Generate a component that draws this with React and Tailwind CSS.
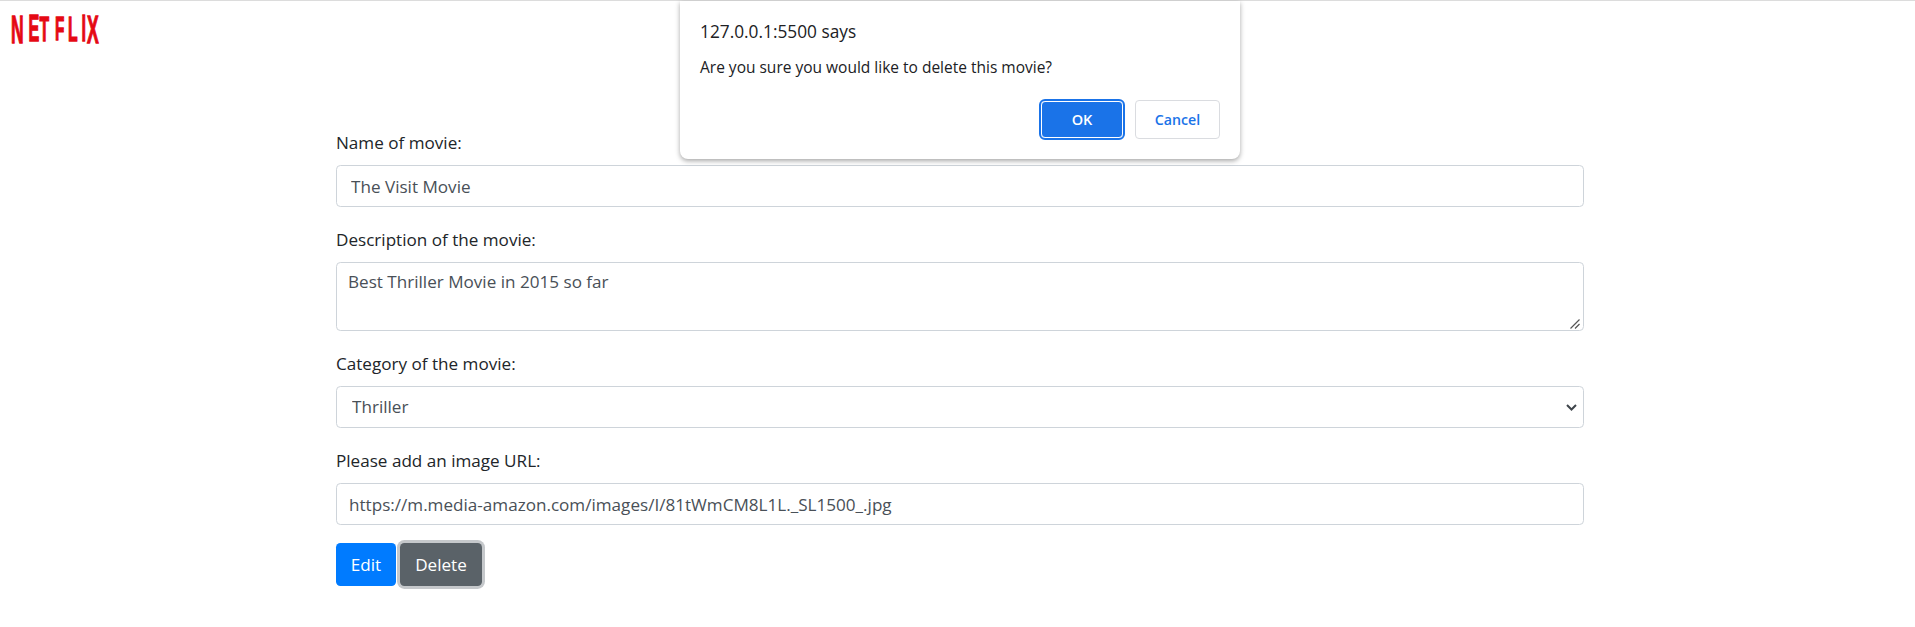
const logo = [
  ["N", 0, 29, 39],
  ["E", 17.5, 27, 36],
  ["T", 28.5, 26.5, 35],
  ["F", 44, 26, 34],
  ["L", 57, 26.5, 35],
  ["I", 70.5, 27, 36],
  ["X", 76, 29, 39],
];

export default function App() {
  const control =
    "block w-full h-[42px] rounded-[4.4px] border border-[#ced4da] bg-white text-[17.1px] text-[#495057] outline-none";
  const label = "block h-[26px] mb-[9px] text-[17.1px] leading-[26px] text-[#212529]";
  return (
    <div className="relative min-h-[627px] border-t border-[#dcdcdc] bg-white font-['Open_Sans','Noto_Sans',sans-serif]">
      <header className="h-[129px] pl-[11px] pt-[13px]">
        <svg width="100" height="32" viewBox="0 0 100 32" className="block">
          <text
            transform="scale(0.45 1)"
            fontFamily="Liberation Sans, sans-serif"
            fontWeight="700"
            fill="#e50914"
            stroke="#e50914"
            strokeWidth="1"
            style={{ vectorEffect: "non-scaling-stroke" }}
          >
            {logo.map(([c, x, y, s]) => (
              <tspan key={c} x={x / 0.45} y={y} fontSize={s} style={{ vectorEffect: "non-scaling-stroke" }}>
                {c}
              </tspan>
            ))}
          </text>
        </svg>
      </header>

      <form className="ml-[336px] w-[1248px]">
        <div className="mb-[20px]">
          <label className={label}>Name of movie:</label>
          <input className={control + " pl-[14px] pr-3"} defaultValue="The Visit Movie" />
        </div>
        <div className="mb-[20px]">
          <label className={label}>Description of the movie:</label>
          <div className="relative">
            <textarea
              className="block h-[69px] w-full resize-none rounded-[4.4px] border border-[#ced4da] bg-white px-[11px] py-[6px] text-[17.1px] leading-[26px] text-[#495057] outline-none"
              defaultValue="Best Thriller Movie in 2015 so far"
            />
            <svg
              width="10"
              height="10"
              viewBox="0 0 10 10"
              className="pointer-events-none absolute bottom-[2px] right-[4px]"
            >
              <path d="M0.5 9.5 L9.5 0.5 M5 9.5 L9.5 5" stroke="#555" strokeWidth="1.2" fill="none" />
            </svg>
          </div>
        </div>
        <div className="mb-[20px]">
          <label className={label}>Category of the movie:</label>
          <div className="relative">
            <select className={control + " appearance-none px-[15px]"} defaultValue="Thriller">
              <option>Thriller</option>
            </select>
            <svg
              width="11"
              height="7"
              viewBox="0 0 11 7"
              className="pointer-events-none absolute right-[7px] top-[18px]"
            >
              <path d="M1 1 L5.5 5.5 L10 1" stroke="#3f454b" strokeWidth="2" fill="none" />
            </svg>
          </div>
        </div>
        <div className="mb-[18px]">
          <label className={label}>Please add an image URL:</label>
          <input
            className={control + " px-3"}
            defaultValue="https://m.media-amazon.com/images/I/81tWmCM8L1L._SL1500_.jpg"
          />
        </div>
        <div className="flex gap-[4px]">
          <button
            type="button"
            className="h-[43px] w-[60px] rounded-[4.4px] bg-[#007bff] text-[17.1px] text-white"
          >
            Edit
          </button>
          <button
            type="button"
            className="h-[43px] w-[82px] rounded-[4.4px] bg-[#5a6268] text-[17.1px] text-white ring-[3px] ring-[#c5c8cb]"
          >
            Delete
          </button>
        </div>
      </form>

      <div className="absolute left-[680px] top-0 h-[158px] w-[560px] rounded-b-[8px] bg-white px-5 shadow-[0_2px_5px_rgba(0,0,0,0.35)]">
        <div className="pt-[20px] text-[17.3px] leading-[22px] text-[#202124]">127.0.0.1:5500 says</div>
        <div className="mt-[14px] text-[15.5px] leading-[20px] text-[#202124]">
          Are you sure you would like to delete this movie?
        </div>
        <div className="mt-[23px] flex items-center justify-end gap-[12px]">
          <button
            type="button"
            className="h-[37px] w-[82px] rounded-[4px] border border-white bg-[#1a73e8] text-[14.5px] font-semibold text-white outline-2 outline-[#1a73e8]"
          >
            OK
          </button>
          <button
            type="button"
            className="h-[39px] w-[85px] rounded-[4px] border border-[#dadce0] bg-white text-[14.2px] font-semibold text-[#1a73e8]"
          >
            Cancel
          </button>
        </div>
      </div>
    </div>
  );
}
